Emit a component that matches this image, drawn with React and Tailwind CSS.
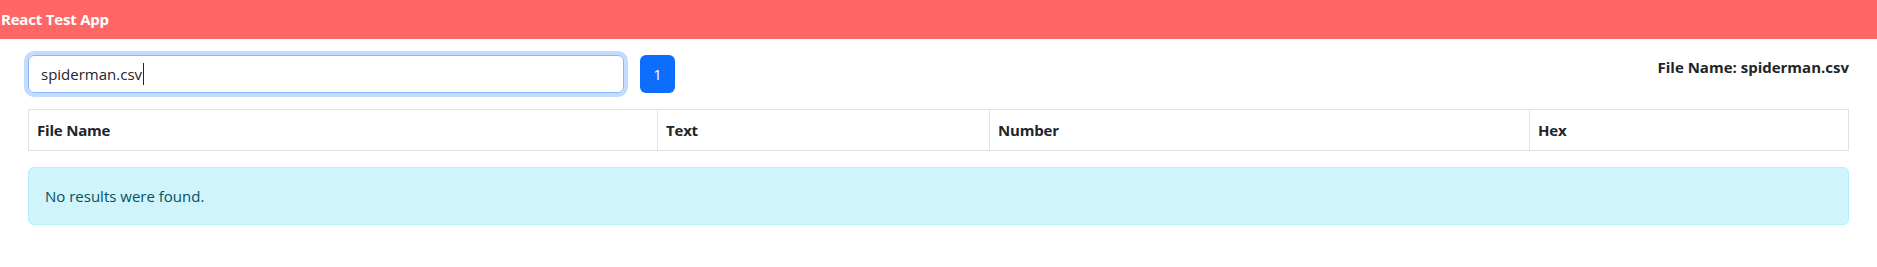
export default function App() {
  const font = { fontFamily: '"Open Sans", "Noto Sans", sans-serif' };
  return (
    <div className="w-[1877px] h-[267px] bg-white text-[#212529]" style={font}>
      <div className="h-[39px] bg-[#ff6666] flex items-center pl-[1px]">
        <span className="text-white font-bold text-[15px] tracking-[-0.2px]">React Test App</span>
      </div>
      <div className="px-[28px] pt-[16px]">
        <div className="flex items-start">
          <div className="w-[596px] h-[38px] border border-[#86b7fe] rounded-[6px] shadow-[0_0_0_4px_rgba(13,110,253,0.25)] flex items-center pl-[12px] text-[15px] text-[#212529]">
            <span>spiderman.csv</span>
            <span className="inline-block w-[1px] h-[22px] bg-[#212529] ml-[1px]"></span>
          </div>
          <button className="ml-[16px] w-[35px] h-[38px] rounded-[6px] bg-[#0d6efd] text-white text-[15px] flex items-center justify-center">
            1
          </button>
          <div className="ml-auto font-bold text-[15px] leading-[24px]">File Name: spiderman.csv</div>
        </div>
        <table className="mt-[16px] w-full border-collapse">
          <thead>
            <tr className="text-[15px] font-bold">
              <th className="w-[629px] border border-[#dee2e6] px-[8px] py-[8px] text-left leading-[24px] tracking-[-0.2px]">File Name</th>
              <th className="w-[332px] border border-[#dee2e6] px-[8px] py-[8px] text-left leading-[24px] tracking-[-0.2px]">Text</th>
              <th className="w-[540px] border border-[#dee2e6] px-[8px] py-[8px] text-left leading-[24px] tracking-[-0.2px]">Number</th>
              <th className="border border-[#dee2e6] px-[8px] py-[8px] text-left leading-[24px] tracking-[-0.2px]">Hex</th>
            </tr>
          </thead>
        </table>
        <div className="mt-[16px] h-[58px] bg-[#cff4fc] border border-[#b6effb] rounded-[6px] px-[16px] flex items-center text-[#055160] text-[15px]">
          No results were found.
        </div>
      </div>
    </div>
  );
}
